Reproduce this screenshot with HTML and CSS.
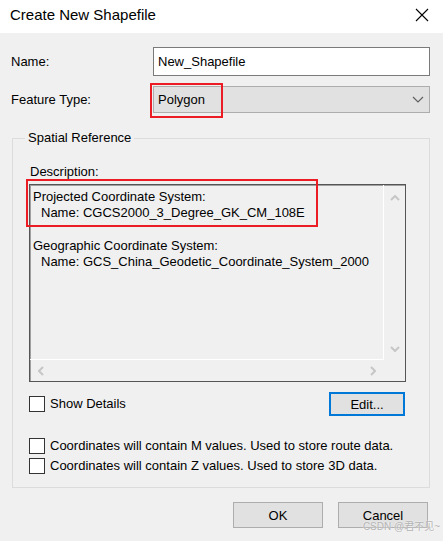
FILE: index.html
```html
<!DOCTYPE html>
<html lang="en">
<head>
  <meta charset="UTF-8" />
  <title>Create New Shapefile</title>
  <link rel="stylesheet" href="styles.css">
</head>
<body>
  <div class="dialog">

    <div class="titlebar">
      <span class="title">Create New Shapefile</span>
      <svg class="close" width="14" height="14" viewBox="0 0 14 14">
        <path d="M1 1 L13 13 M13 1 L1 13" stroke="#000" stroke-width="1.1" fill="none"/>
      </svg>
    </div>

    <div class="content">
      <div class="field-row name-row">
        <span class="field-label">Name:</span>
        <div class="textbox">New_Shapefile</div>
      </div>

      <div class="field-row type-row">
        <span class="field-label">Feature Type:</span>
        <div class="combo">
          <span>Polygon</span>
          <svg class="combo-arrow" width="12" height="7" viewBox="0 0 12 7">
            <path d="M1 1 L6 6 L11 1" stroke="#606060" stroke-width="1.2" fill="none"/>
          </svg>
          <span class="mark mark-type"></span>
        </div>
      </div>

      <fieldset class="group">
        <legend>Spatial Reference</legend>
        <div class="desc-label">Description:</div>

        <div class="listbox">
          <div class="list-text">
            <div>Projected Coordinate System:</div>
            <div class="indent">Name: CGCS2000_3_Degree_GK_CM_108E</div>
            <div>&nbsp;</div>
            <div>Geographic Coordinate System:</div>
            <div class="indent">Name: GCS_China_Geodetic_Coordinate_System_2000</div>
          </div>
          <div class="vscroll">
            <svg width="10" height="6" viewBox="0 0 10 6"><path d="M1 5 L5 1 L9 5" stroke="#c6c6c6" stroke-width="2" fill="none"/></svg>
            <svg width="10" height="6" viewBox="0 0 10 6"><path d="M1 1 L5 5 L9 1" stroke="#c6c6c6" stroke-width="2" fill="none"/></svg>
          </div>
          <div class="hscroll">
            <svg width="6" height="10" viewBox="0 0 6 10"><path d="M5 1 L1 5 L5 9" stroke="#c6c6c6" stroke-width="2" fill="none"/></svg>
            <svg width="6" height="10" viewBox="0 0 6 10"><path d="M1 1 L5 5 L1 9" stroke="#c6c6c6" stroke-width="2" fill="none"/></svg>
          </div>
          <div class="corner"></div>
          <span class="mark mark-desc"></span>
        </div>

        <div class="details-row">
          <label class="check"><span class="box"></span>Show Details</label>
          <button class="btn btn-edit">Edit...</button>
        </div>

        <div class="check-list">
          <label class="check"><span class="box"></span>Coordinates will contain M values. Used to store route data.</label>
          <label class="check"><span class="box"></span>Coordinates will contain Z values. Used to store 3D data.</label>
        </div>
      </fieldset>

      <div class="buttons">
        <button class="btn">OK</button>
        <button class="btn">Cancel</button>
      </div>
    </div>

    <div class="watermark">CSDN @君不见~</div>
  </div>
</body>
</html>
```

FILE: styles.css
```css
* {
  box-sizing: border-box;
  margin: 0;
  padding: 0;
}

body {
  background: #f0f0f0;
  color: #000;
  font-family: 'Liberation Sans', Arial, sans-serif;
  font-size: 13px;
  line-height: 16px;
}

.dialog {
  position: relative;
  width: 443px;
  height: 541px;
}

.titlebar {
  height: 33px;
  background: #fff;
  display: flex;
  align-items: center;
  justify-content: space-between;
  padding: 0 14px 3px 10px;
}

.title {
  font-size: 15px;
}

.content {
  padding: 14px 13px 0 11px;
}

.field-row {
  display: flex;
  align-items: center;
}

.field-label {
  width: 142px;
}

.textbox, .combo {
  flex: 1;
  display: flex;
  align-items: center;
  padding-left: 4px;
}

.textbox {
  height: 29px;
  background: #fff;
  border: 1px solid #7a7a7a;
}

.type-row {
  margin-top: 10px;
}

.combo {
  position: relative;
  height: 27px;
  background: #e1e1e1;
  border: 1px solid #adadad;
  justify-content: space-between;
  padding-right: 5px;
}

.mark {
  position: absolute;
  border: 2px solid #ec1c24;
}

.mark-type {
  left: -4px;
  top: -4px;
  width: 73px;
  height: 35px;
}

.group {
  margin: 17px 0 0 1px;
  border: 1px solid #dcdcdc;
  padding: 18px 23px 13px 16px;
}

.group legend {
  margin-left: -4px;
  padding: 0 3px;
}

.desc-label {
  margin-left: 1px;
}

.listbox {
  position: relative;
  margin-top: 4px;
  height: 198px;
  display: grid;
  grid-template-columns: 1fr 21px;
  grid-template-rows: 1fr 21px;
  border: 1px solid #555;
  box-shadow: inset 1px 1px 0 #a0a0a0;
}

.list-text {
  border-right: 1px solid #fff;
  border-bottom: 1px solid #fff;
  padding: 4px 0 0 3px;
  line-height: 16.3px;
  white-space: nowrap;
  overflow: hidden;
}

.list-text .indent {
  padding-left: 8px;
}

.vscroll {
  display: flex;
  flex-direction: column;
  justify-content: space-between;
  align-items: center;
  padding: 10px 0 8px;
}

.hscroll {
  display: flex;
  justify-content: space-between;
  align-items: center;
  padding: 0 8px 0 8px;
}

.mark-desc {
  left: -4px;
  top: -6px;
  width: 292px;
  height: 48px;
}

.details-row {
  display: flex;
  justify-content: space-between;
  align-items: center;
  margin-top: 10px;
}

.check {
  display: flex;
  align-items: center;
  gap: 5px;
}

.box {
  width: 16px;
  height: 16px;
  background: #fff;
  border: 1px solid #333;
}

.btn {
  font-family: inherit;
  font-size: 13px;
  color: #000;
  background: #e1e1e1;
  border: 1px solid #adadad;
}

.btn-edit {
  width: 76px;
  height: 24px;
  border: 2px solid #0078d7;
  margin-right: 1px;
}

.check-list {
  margin-top: 22px;
  display: flex;
  flex-direction: column;
  gap: 4px;
}

.buttons {
  display: flex;
  justify-content: flex-end;
  gap: 15px;
  margin-top: 14px;
  padding-right: 2px;
}

.buttons .btn {
  width: 90px;
  height: 26px;
}

.watermark {
  position: absolute;
  right: 3px;
  bottom: 6px;
  font-family: 'Liberation Sans', 'Noto Sans CJK SC', sans-serif;
  font-size: 10px;
  color: #b4b4b4;
  text-shadow: 0 0 2px #fff;
}
```
